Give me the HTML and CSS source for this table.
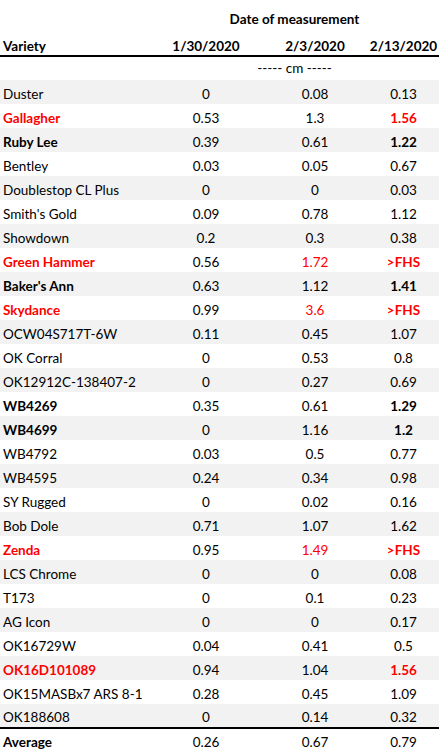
FILE: index.html
```html
<!DOCTYPE html>
<html lang="en">
<head>
    <meta charset="UTF-8">
    <meta name="viewport" content="width=device-width, initial-scale=1.0">
    <title>Date of measurement</title>
    <link rel="stylesheet" href="styles.css">
</head>
<body>
    <table class="growth">
        <colgroup>
            <col class="col-variety">
            <col class="col-a">
            <col class="col-b">
            <col class="col-c">
        </colgroup>
        <thead>
            <tr class="title-row">
                <td></td>
                <td colspan="3" class="num">Date of measurement</td>
            </tr>
            <tr class="head-row">
                <th class="name">Variety</th>
                <th class="num">1/30/2020</th>
                <th class="num">2/3/2020</th>
                <th class="num">2/13/2020</th>
            </tr>
            <tr class="unit-row">
                <td></td>
                <td colspan="3" class="num">----- cm -----</td>
            </tr>
        </thead>
        <tbody>
            <tr><td class="name">Duster</td><td class="num">0</td><td class="num">0.08</td><td class="num">0.13</td></tr>
            <tr><td class="name red bold">Gallagher</td><td class="num">0.53</td><td class="num">1.3</td><td class="num red bold">1.56</td></tr>
            <tr><td class="name bold">Ruby Lee</td><td class="num">0.39</td><td class="num">0.61</td><td class="num bold">1.22</td></tr>
            <tr><td class="name">Bentley</td><td class="num">0.03</td><td class="num">0.05</td><td class="num">0.67</td></tr>
            <tr><td class="name">Doublestop CL Plus</td><td class="num">0</td><td class="num">0</td><td class="num">0.03</td></tr>
            <tr><td class="name">Smith's Gold</td><td class="num">0.09</td><td class="num">0.78</td><td class="num">1.12</td></tr>
            <tr><td class="name">Showdown</td><td class="num">0.2</td><td class="num">0.3</td><td class="num">0.38</td></tr>
            <tr><td class="name red bold">Green Hammer</td><td class="num">0.56</td><td class="num red">1.72</td><td class="num red bold">&gt;FHS</td></tr>
            <tr><td class="name bold">Baker's Ann</td><td class="num">0.63</td><td class="num">1.12</td><td class="num bold">1.41</td></tr>
            <tr><td class="name red bold">Skydance</td><td class="num">0.99</td><td class="num red">3.6</td><td class="num red bold">&gt;FHS</td></tr>
            <tr><td class="name">OCW04S717T-6W</td><td class="num">0.11</td><td class="num">0.45</td><td class="num">1.07</td></tr>
            <tr><td class="name">OK Corral</td><td class="num">0</td><td class="num">0.53</td><td class="num">0.8</td></tr>
            <tr><td class="name">OK12912C-138407-2</td><td class="num">0</td><td class="num">0.27</td><td class="num">0.69</td></tr>
            <tr><td class="name bold">WB4269</td><td class="num">0.35</td><td class="num">0.61</td><td class="num bold">1.29</td></tr>
            <tr><td class="name bold">WB4699</td><td class="num">0</td><td class="num">1.16</td><td class="num bold">1.2</td></tr>
            <tr><td class="name">WB4792</td><td class="num">0.03</td><td class="num">0.5</td><td class="num">0.77</td></tr>
            <tr><td class="name">WB4595</td><td class="num">0.24</td><td class="num">0.34</td><td class="num">0.98</td></tr>
            <tr><td class="name">SY Rugged</td><td class="num">0</td><td class="num">0.02</td><td class="num">0.16</td></tr>
            <tr><td class="name">Bob Dole</td><td class="num">0.71</td><td class="num">1.07</td><td class="num">1.62</td></tr>
            <tr><td class="name red bold">Zenda</td><td class="num">0.95</td><td class="num red">1.49</td><td class="num red bold">&gt;FHS</td></tr>
            <tr><td class="name">LCS Chrome</td><td class="num">0</td><td class="num">0</td><td class="num">0.08</td></tr>
            <tr><td class="name">T173</td><td class="num">0</td><td class="num">0.1</td><td class="num">0.23</td></tr>
            <tr><td class="name">AG Icon</td><td class="num">0</td><td class="num">0</td><td class="num">0.17</td></tr>
            <tr><td class="name">OK16729W</td><td class="num">0.04</td><td class="num">0.41</td><td class="num">0.5</td></tr>
            <tr><td class="name red bold">OK16D101089</td><td class="num">0.94</td><td class="num">1.04</td><td class="num red bold">1.56</td></tr>
            <tr><td class="name">OK15MASBx7 ARS 8-1</td><td class="num">0.28</td><td class="num">0.45</td><td class="num">1.09</td></tr>
            <tr><td class="name">OK188608</td><td class="num">0</td><td class="num">0.14</td><td class="num">0.32</td></tr>
        </tbody>
        <tfoot>
            <tr class="avg-row">
                <td class="name bold">Average</td>
                <td class="num">0.26</td>
                <td class="num">0.67</td>
                <td class="num">0.79</td>
            </tr>
        </tfoot>
    </table>
</body>
</html>
```

FILE: styles.css
```css
* {
    margin: 0;
    padding: 0;
    box-sizing: border-box;
}

body {
    font-family: Lato, 'Open Sans', sans-serif;
    font-size: 13.5px;
    color: #000;
    background-color: white;
}

.growth {
    width: 439px;
    border-collapse: collapse;
    table-layout: fixed;
}

.col-variety { width: 150px; }
.col-a { width: 112px; }
.col-b { width: 106px; }
.col-c { width: 71px; }

.growth td,
.growth th {
    height: 24px;
    padding: 0 3px 1px;
    line-height: 17px;
    vertical-align: bottom;
    white-space: nowrap;
}

.growth th {
    font-weight: bold;
}

.growth .num {
    text-align: center;
    padding-left: 0;
    padding-right: 0;
}

.name {
    text-align: left;
}

.title-row td {
    height: 29px;
    font-weight: bold;
}

.growth .head-row th {
    height: 27px;
    padding-bottom: 0;
    border-bottom: 2px solid #000;
}

.unit-row td {
    height: 24px;
    padding-bottom: 3px;
}

tbody tr:nth-child(odd) td {
    background-color: #f2f2f2;
}

tbody tr:last-child td {
    border-bottom: 2px solid #000;
}

.avg-row td {
    height: 24px;
}

.bold {
    font-weight: bold;
}

.red {
    color: #ff0000;
}
```
